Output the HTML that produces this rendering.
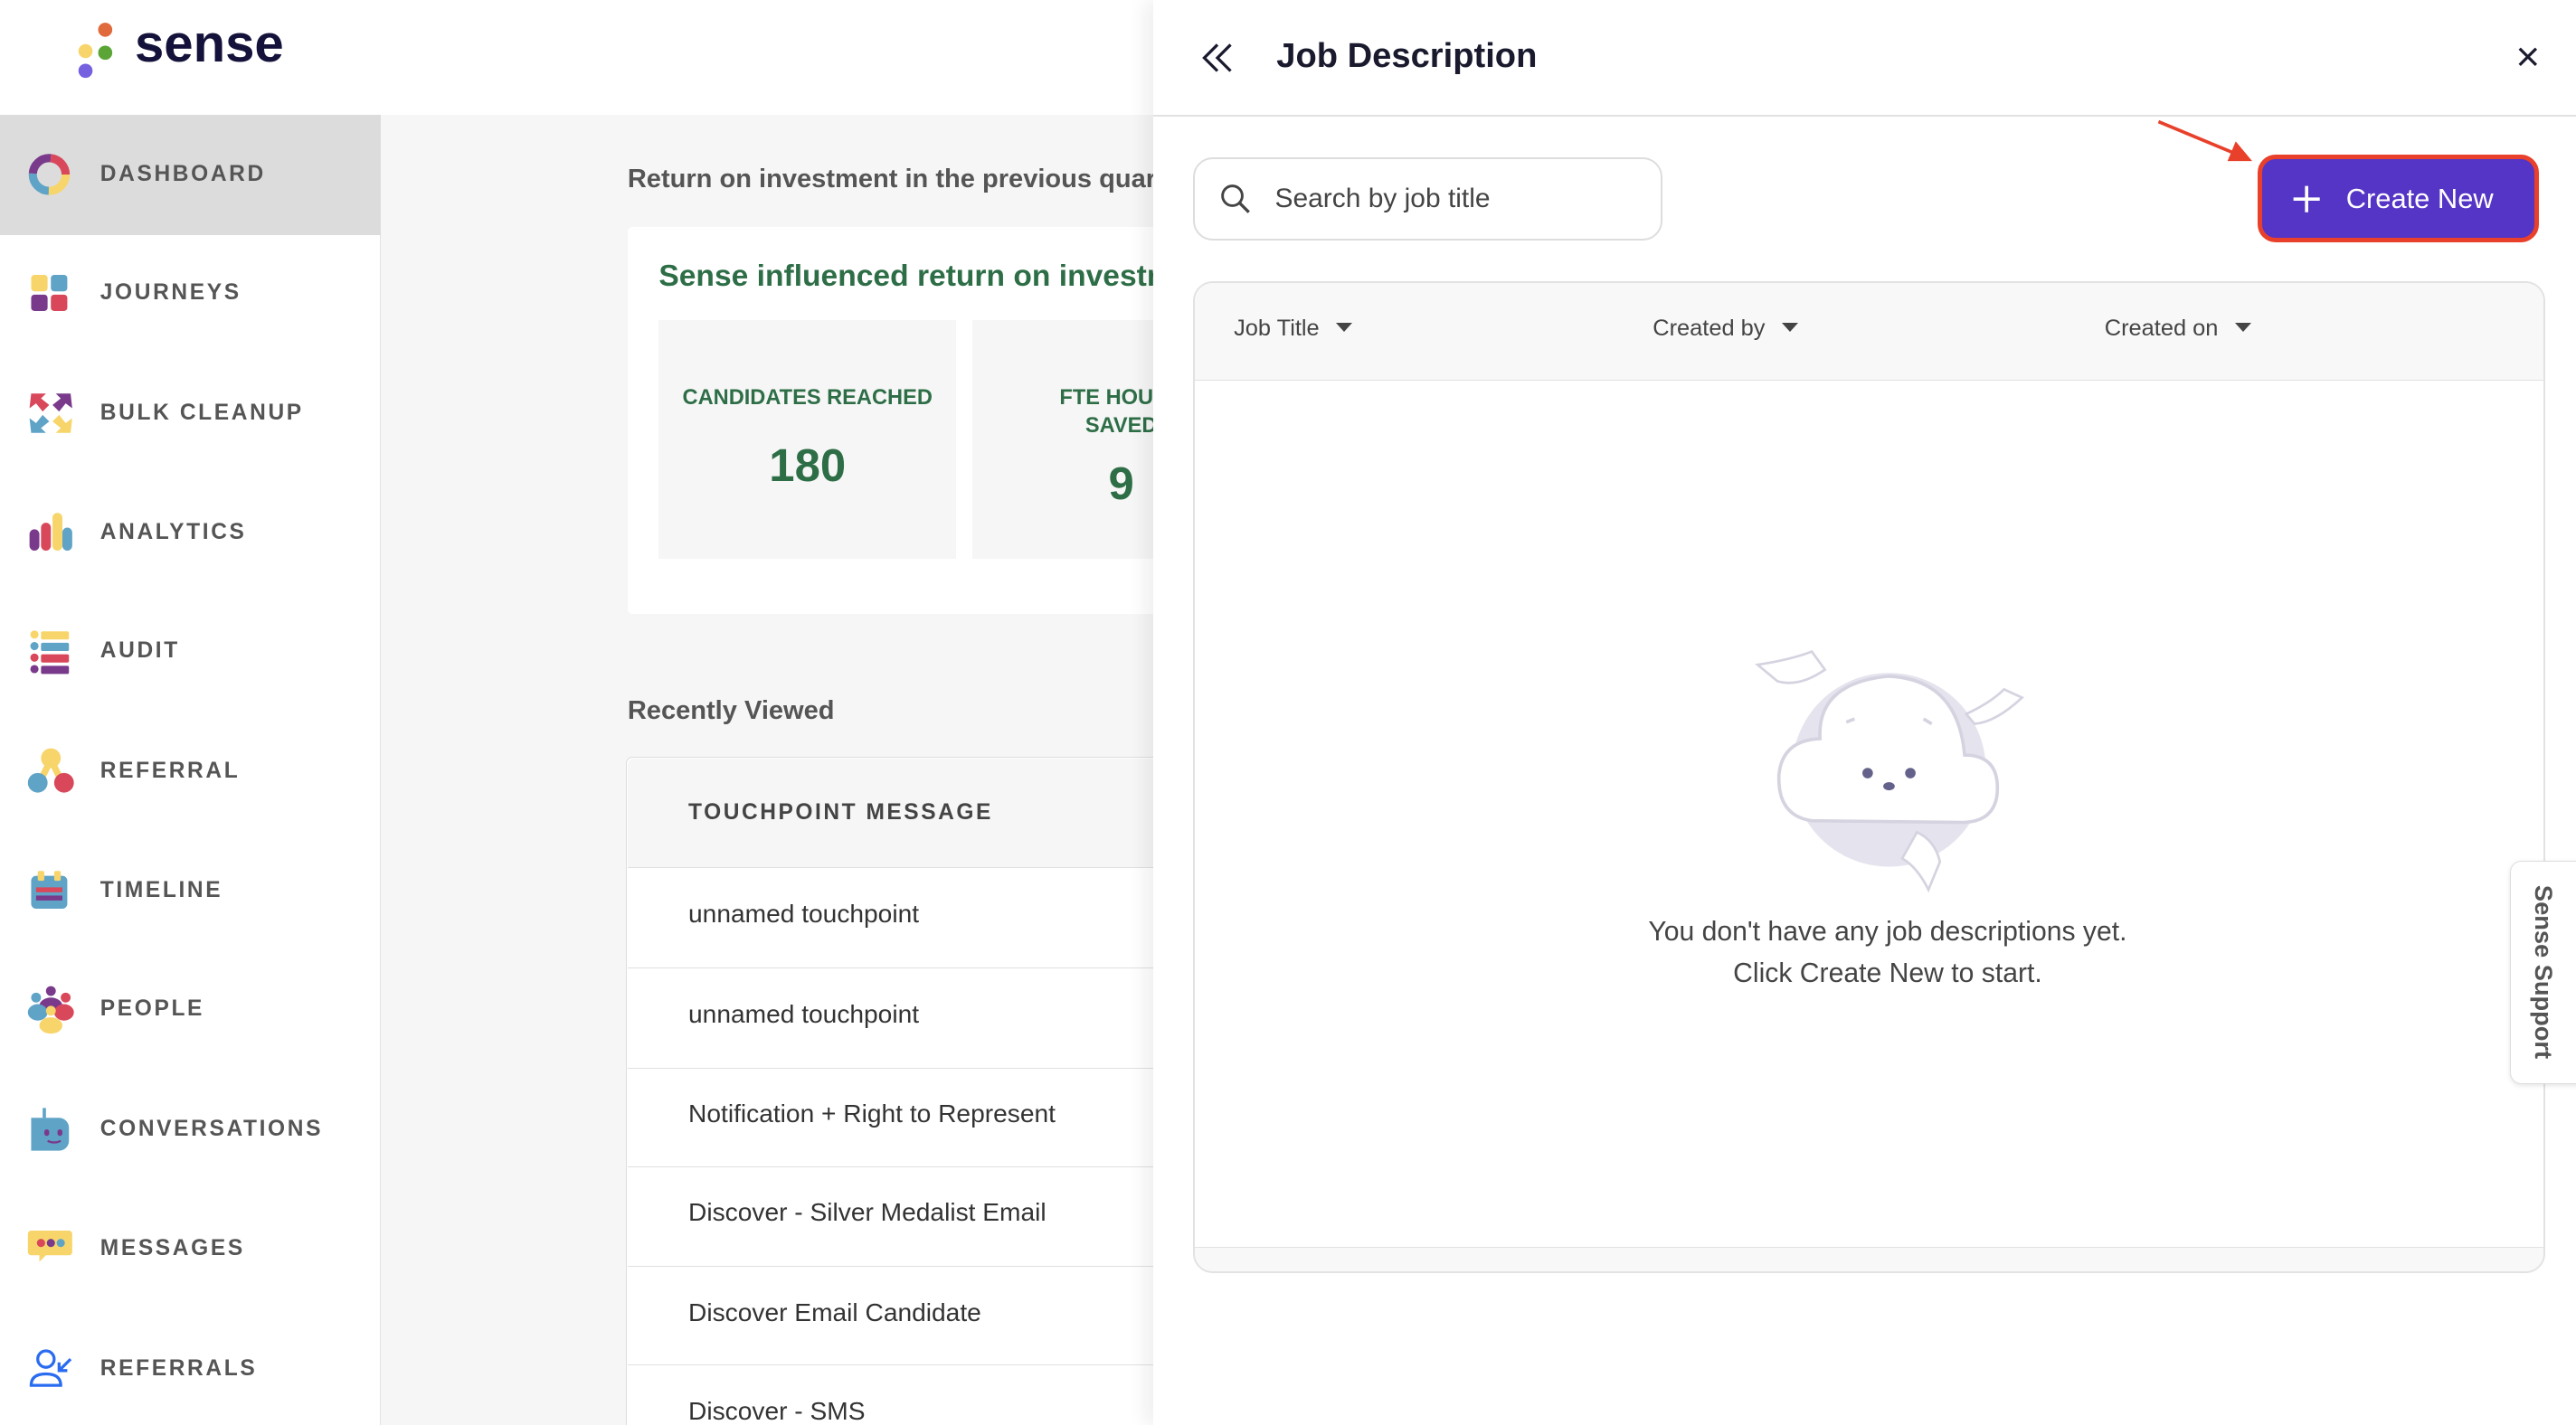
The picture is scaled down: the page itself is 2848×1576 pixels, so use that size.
<!DOCTYPE html>
<html><head><meta charset="utf-8"><style>
html,body{margin:0;padding:0;width:2848px;height:1576px;overflow:hidden;background:#fff}
#z{zoom:1.81633;width:1568px;height:868px;position:relative;overflow:hidden;font-family:"Liberation Sans",sans-serif}
.a{position:absolute}
.nav{position:absolute;left:0;width:232px;height:73px}
.nav span{position:absolute;left:61px;top:50%;transform:translateY(-50%);font-size:13.5px;font-weight:bold;letter-spacing:1.45px;color:#555}
.nav svg{position:absolute;left:16px;top:50%;transform:translateY(-50%)}
.row{position:absolute;left:382px;width:330px;height:60px;border-top:1px solid #e0e0e0;background:#fff;font-size:15.5px;color:#333}
.row span{position:absolute;left:37px;top:50%;transform:translateY(-50%);white-space:nowrap}
.th{position:absolute;top:192px;font-size:14px;color:#444}
.th:after{content:"";display:inline-block;margin-left:10px;border-left:5px solid transparent;border-right:5px solid transparent;border-top:6px solid #444;vertical-align:2px}
</style></head><body><div id="z">
<div class="a" style="left:0;top:0;width:1568px;height:70px;background:#fff"></div>
<svg class="a" style="left:44px;top:12px" width="30" height="38"><circle cx="20" cy="6" r="4.3" fill="#e06a3c"/><circle cx="8" cy="19" r="4.3" fill="#f7d56b"/><circle cx="20" cy="20" r="4.3" fill="#5aa536"/><circle cx="8" cy="31" r="4.3" fill="#7560e0"/></svg>
<div class="a" style="left:82px;top:8px;font-size:32px;font-weight:bold;color:#14123a">sense</div>
<div class="a" style="left:232px;top:70px;width:1336px;height:798px;background:#f6f6f6"></div>
<div class="a" style="left:231px;top:70px;width:1px;height:798px;background:#e2e2e2"></div>
<div class="nav" style="top:70px;background:#dcdcdc"><svg width="28" height="28" viewBox="0 0 28 28"><circle cx="14" cy="14" r="10" fill="none" stroke-width="5" stroke="#f7d56b" stroke-dasharray="16 100"/><circle cx="14" cy="14" r="10" fill="none" stroke-width="5" stroke="#5fa3c7" stroke-dasharray="0 16 16 100"/><circle cx="14" cy="14" r="10" fill="none" stroke-width="5" stroke="#7a3a8c" stroke-dasharray="0 32 16 100"/><circle cx="14" cy="14" r="10" fill="none" stroke-width="5" stroke="#d9475a" stroke-dasharray="0 48 16 100"/></svg><span>DASHBOARD</span></div>
<div class="nav" style="top:142px"><svg width="28" height="28"><rect x="3" y="3" width="10" height="10" rx="2" fill="#f7d56b"/><rect x="15" y="3" width="10" height="10" rx="2" fill="#5fa3c7"/><rect x="3" y="15" width="10" height="10" rx="2" fill="#7a3a8c"/><rect x="15" y="15" width="10" height="10" rx="2" fill="#d9475a"/></svg><span>JOURNEYS</span></div>
<div class="nav" style="top:215px"><svg width="30" height="30"><path d="M2 12 L3 3 L12 3 L9 6 L14 10 L10 14 L6 9 Z" fill="#d9475a"/><path d="M28 12 L27 3 L18 3 L21 6 L16 10 L20 14 L24 9 Z" fill="#7a3a8c"/><path d="M2 18 L3 27 L12 27 L9 24 L14 20 L10 16 L6 21 Z" fill="#5fa3c7"/><path d="M28 18 L27 27 L18 27 L21 24 L16 20 L20 16 L24 21 Z" fill="#f7d56b"/></svg><span>BULK CLEANUP</span></div>
<div class="nav" style="top:288px"><svg width="28" height="28"><rect x="2" y="12" width="6" height="13" rx="3" fill="#7a3a8c"/><rect x="9" y="8" width="6" height="17" rx="3" fill="#d9475a"/><rect x="16" y="2" width="6" height="23" rx="3" fill="#f7d56b"/><rect x="22" y="11" width="6" height="14" rx="3" fill="#5fa3c7"/></svg><span>ANALYTICS</span></div>
<div class="nav" style="top:360px"><svg width="28" height="28"><g><circle cx="5" cy="4" r="2.5" fill="#f7d56b"/><rect x="9" y="2" width="17" height="5" rx="1" fill="#f7d56b"/><circle cx="5" cy="11" r="2.5" fill="#5fa3c7"/><rect x="9" y="9" width="17" height="5" rx="1" fill="#5fa3c7"/><circle cx="5" cy="18" r="2.5" fill="#d9475a"/><rect x="9" y="16" width="17" height="5" rx="1" fill="#d9475a"/><circle cx="5" cy="25" r="2.5" fill="#7a3a8c"/><rect x="9" y="23" width="17" height="5" rx="1" fill="#7a3a8c"/></g></svg><span>AUDIT</span></div>
<div class="nav" style="top:433px"><svg width="30" height="30"><path d="M15 8 L9 20 M15 8 L21 20" stroke="#f7d56b" stroke-width="4"/><circle cx="15" cy="7" r="6" fill="#f7d56b"/><circle cx="7" cy="22" r="6" fill="#5fa3c7"/><circle cx="23" cy="22" r="6" fill="#d9475a"/></svg><span>REFERRAL</span></div>
<div class="nav" style="top:506px"><svg width="28" height="28"><rect x="3" y="5" width="22" height="20" rx="3" fill="#5fa3c7"/><rect x="7" y="2" width="4" height="6" rx="1" fill="#f7d56b"/><rect x="17" y="2" width="4" height="6" rx="1" fill="#f7d56b"/><rect x="6" y="12" width="16" height="3" fill="#d9475a"/><rect x="6" y="17" width="16" height="3" fill="#7a3a8c"/></svg><span>TIMELINE</span></div>
<div class="nav" style="top:578px"><svg width="30" height="30"><circle cx="15" cy="4" r="3" fill="#7a3a8c"/><circle cx="6" cy="8" r="3" fill="#5fa3c7"/><circle cx="24" cy="8" r="3" fill="#d9475a"/><ellipse cx="15" cy="13" rx="7" ry="5" fill="#7a3a8c"/><ellipse cx="7" cy="17" rx="6" ry="5" fill="#5fa3c7"/><ellipse cx="23" cy="17" rx="6" ry="5" fill="#d9475a"/><circle cx="15" cy="16" r="3" fill="#f7d56b"/><ellipse cx="15" cy="25" rx="7" ry="5" fill="#f7d56b"/></svg><span>PEOPLE</span></div>
<div class="nav" style="top:651px"><svg width="28" height="30"><rect x="10" y="2" width="2" height="6" fill="#5fa3c7"/><path d="M3 8 H20 A6 6 0 0 1 26 14 V22 A6 6 0 0 1 20 28 H3 Z" fill="#5fa3c7"/><rect x="11" y="15" width="3" height="4" rx="1.5" fill="#7a3a8c"/><rect x="19" y="15" width="3" height="4" rx="1.5" fill="#7a3a8c"/><path d="M13 22 Q17 24 21 22" stroke="#7a3a8c" fill="none" stroke-width="1.2"/></svg><span>CONVERSATIONS</span></div>
<div class="nav" style="top:724px"><svg width="30" height="28"><path d="M3 3 H26 A2 2 0 0 1 28 5 V16 A2 2 0 0 1 26 18 H12 L8 22 V18 H3 A2 2 0 0 1 1 16 V5 A2 2 0 0 1 3 3Z" fill="#f7d56b"/><circle cx="9" cy="10.5" r="2.5" fill="#d9475a"/><circle cx="15" cy="10.5" r="2.5" fill="#7a3a8c"/><circle cx="21" cy="10.5" r="2.5" fill="#5fa3c7"/></svg><span>MESSAGES</span></div>
<div class="nav" style="top:797px"><svg width="30" height="30"><circle cx="12" cy="9" r="5" fill="none" stroke="#2a6cf0" stroke-width="1.8"/><path d="M3 25 Q3 18 12 18 Q21 18 21 25 Z" fill="none" stroke="#2a6cf0" stroke-width="1.8"/><path d="M27 9 L20 16 M20 11 V16 H25" fill="none" stroke="#2a6cf0" stroke-width="1.8"/></svg><span>REFERRALS</span></div>
<div class="a" style="left:382px;top:100px;font-size:16px;font-weight:bold;color:#555;white-space:nowrap">Return on investment in the previous quarter</div>
<div class="a" style="left:382px;top:138px;width:340px;height:236px;background:#fff;border-radius:3px"></div>
<div class="a" style="left:401px;top:158px;font-size:18.5px;font-weight:bold;color:#2e6e47;white-space:nowrap">Sense influenced return on investment</div>
<div class="a" style="left:401px;top:195px;width:181px;height:145px;background:#f6f6f6"></div>
<div class="a" style="left:401px;top:235px;width:181px;text-align:center;font-size:13px;font-weight:bold;color:#2e6e47">CANDIDATES REACHED</div>
<div class="a" style="left:401px;top:267px;width:181px;text-align:center;font-size:28px;font-weight:bold;color:#2e6e47">180</div>
<div class="a" style="left:592px;top:195px;width:181px;height:145px;background:#f6f6f6"></div>
<div class="a" style="left:592px;top:234px;width:181px;text-align:center;font-size:13px;font-weight:bold;color:#2e6e47;line-height:17px">FTE HOURS<br>SAVED</div>
<div class="a" style="left:592px;top:278px;width:181px;text-align:center;font-size:28px;font-weight:bold;color:#2e6e47">9</div>
<div class="a" style="left:382px;top:424px;font-size:16px;font-weight:bold;color:#555">Recently Viewed</div>
<div class="a" style="left:381px;top:461px;width:340px;height:420px;border:1px solid #ddd;border-radius:4px;background:#fff"></div>
<div class="a" style="left:382px;top:462px;width:330px;height:66px;background:#f6f6f6;border-radius:4px 0 0 0"></div>
<div class="a" style="left:419px;top:487px;font-size:13.5px;font-weight:bold;letter-spacing:1.4px;color:#444">TOUCHPOINT MESSAGE</div>
<div class="row" style="top:528px"><span style="margin-top:-2px">unnamed touchpoint</span></div>
<div class="row" style="top:589px"><span style="margin-top:-2px">unnamed touchpoint</span></div>
<div class="row" style="top:650px"><span style="margin-top:-2px">Notification + Right to Represent</span></div>
<div class="row" style="top:710px"><span style="margin-top:-2px">Discover - Silver Medalist Email</span></div>
<div class="row" style="top:771px"><span style="margin-top:-2px">Discover Email Candidate</span></div>
<div class="row" style="top:831px"><span style="margin-top:-2px">Discover - SMS</span></div>
<div class="a" style="left:702px;top:0;width:866px;height:868px;background:#fff;box-shadow:-6px 0 10px rgba(0,0,0,0.06)"></div>
<div class="a" style="left:702px;top:70px;width:866px;height:1px;background:#e2e2e2"></div>
<svg class="a" style="left:730px;top:24px" width="22" height="22"><path d="M11 3 L3 11 L11 19 M19 3 L11 11 L19 19" fill="none" stroke="#1a1a2e" stroke-width="1.8"/></svg>
<div class="a" style="left:777px;top:22px;font-size:21px;font-weight:bold;color:#1a1a2e">Job Description</div>
<svg class="a" style="left:1532px;top:28px" width="13" height="13"><path d="M1.5 1.5 L11.5 11.5 M11.5 1.5 L1.5 11.5" stroke="#1a1a2e" stroke-width="1.8"/></svg>
<div class="a" style="left:726px;top:96px;width:284px;height:48px;border:1.5px solid #ddd;border-radius:12px"></div>
<svg class="a" style="left:742px;top:111px" width="20" height="20"><circle cx="8" cy="8" r="6" fill="none" stroke="#444" stroke-width="1.6"/><path d="M12.5 12.5 L18 18" stroke="#444" stroke-width="1.8"/></svg>
<div class="a" style="left:776px;top:112px;font-size:16.5px;color:#444">Search by job title</div>
<svg class="a" style="left:1300px;top:66px" width="80" height="40"><path d="M14 8 L62 28" stroke="#e8402a" stroke-width="2"/><path d="M71 32 L56 32 L61 20 Z" fill="#e8402a"/></svg>
<div class="a" style="left:1374px;top:94px;width:166px;height:48px;background:#5535c5;border:3px solid #e8402a;border-radius:11px"></div>
<svg class="a" style="left:1394px;top:111px" width="20" height="20"><path d="M10 2 V18 M2 10 H18" stroke="#fff" stroke-width="2"/></svg>
<div class="a" style="left:1428px;top:111px;font-size:17px;color:#fff">Create New</div>
<div class="a" style="left:726px;top:171px;width:821px;height:602px;border:1.5px solid #e2e2e2;border-radius:12px;overflow:hidden">
<div class="a" style="left:0;top:0;width:100%;height:59px;background:#f8f8f8;border-bottom:1px solid #e2e2e2"></div>
<div class="a" style="left:0;top:587px;width:100%;height:16px;background:#f8f8f8;border-top:1px solid #e2e2e2"></div>
</div>
<div class="th" style="left:751px">Job Title</div>
<div class="th" style="left:1006px">Created by</div>
<div class="th" style="left:1281px">Created on</div>
<svg class="a" style="left:1060px;top:395px" width="180" height="155" viewBox="1060 395 180 155">
<circle cx="1150" cy="469" r="59" fill="#e5e4ee"/>
<path d="M1103 500 Q1082 497 1083 472 Q1085 451 1108 450 Q1106 416 1150 412 Q1192 414 1196 460 Q1216 460 1216 480 Q1216 500 1196 501 Z" fill="#fff" stroke="#d5d3e0" stroke-width="2"/>
<path d="M1124 440 L1129 438 M1171 438 L1176 441" stroke="#d5d3e0" stroke-width="2"/>
<circle cx="1137" cy="471" r="3.2" fill="#64628a"/><circle cx="1163" cy="471" r="3.2" fill="#64628a"/><ellipse cx="1150" cy="479" rx="3.5" ry="2.5" fill="#64628a"/>
<path d="M1070 405 Q1090 402 1103 397 L1111 408 Q1095 419 1082 415 Z" fill="#fff" stroke="#d5d3e0" stroke-width="1.5"/>
<path d="M1197 435 Q1212 428 1220 420 L1231 425 Q1215 440 1202 441 Z" fill="#fff" stroke="#d5d3e0" stroke-width="1.5"/>
<path d="M1167 507 Q1178 512 1181 525 L1174 542 Q1167 528 1158 523 Z" fill="#fff" stroke="#d5d3e0" stroke-width="1.5"/>
</svg>
<div class="a" style="left:902px;top:555px;width:494px;text-align:center;font-size:16.6px;color:#444;line-height:25.5px">You don't have any job descriptions yet.<br>Click Create New to start.</div>
<div class="a" style="left:1528px;top:524px;width:50px;height:135px;background:#fff;border:1px solid #ddd;border-radius:7px;box-shadow:0 1px 3px rgba(0,0,0,0.1)"></div>
<div class="a" style="left:1548px;top:592px;transform:translate(-50%,-50%) rotate(90deg);font-size:15px;font-weight:bold;color:#555;white-space:nowrap">Sense Support</div>
</div></body></html>
